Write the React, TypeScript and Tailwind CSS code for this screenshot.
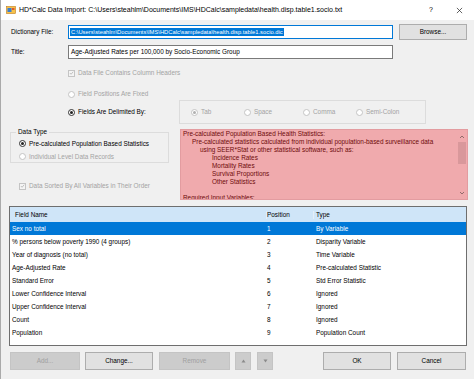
import { ReactNode } from 'react';

interface Row {
  name: string;
  pos: number;
  type: string;
}

const rows: Row[] = [
  { name: 'Sex no total', pos: 1, type: 'By Variable' },
  { name: '% persons below poverty 1990 (4 groups)', pos: 2, type: 'Disparity Variable' },
  { name: 'Year of diagnosis (no total)', pos: 3, type: 'Time Variable' },
  { name: 'Age-Adjusted Rate', pos: 4, type: 'Pre-calculated Statistic' },
  { name: 'Standard Error', pos: 5, type: 'Std Error Statistic' },
  { name: 'Lower Confidence Interval', pos: 6, type: 'Ignored' },
  { name: 'Upper Confidence Interval', pos: 7, type: 'Ignored' },
  { name: 'Count', pos: 8, type: 'Ignored' },
  { name: 'Population', pos: 9, type: 'Population Count' },
];

function Check({ label, disabled }: { label: string; disabled?: boolean }) {
  return (
    <div className="flex items-center gap-[3px]">
      <div className={`w-[7px] h-[7px] border flex items-center justify-center ${disabled ? 'border-[#c4c4c4] bg-[#f4f4f4]' : 'border-[#333] bg-white'}`}>
        <svg width="6" height="6" viewBox="0 0 6 6">
          <path d="M1 3 L2.5 4.5 L5 1.5" fill="none" stroke={disabled ? '#b0b0b0' : '#333'} strokeWidth="0.9" />
        </svg>
      </div>
      <span className={disabled ? 'text-[#a3a3a3]' : 'text-black'}>{label}</span>
    </div>
  );
}

function Radio({ label, checked, disabled }: { label: string; checked?: boolean; disabled?: boolean }) {
  return (
    <div className="flex items-center gap-[3px]">
      <div className={`w-[7px] h-[7px] rounded-full border flex items-center justify-center bg-white ${disabled ? 'border-[#c4c4c4]' : 'border-[#333]'}`}>
        {checked && <div className={`w-[3px] h-[3px] rounded-full ${disabled ? 'bg-[#b0b0b0]' : 'bg-[#222]'}`} />}
      </div>
      <span className={disabled ? 'text-[#a3a3a3]' : 'text-black'}>{label}</span>
    </div>
  );
}

function Btn({ children, w, disabled, ml }: { children: ReactNode; w: string; disabled?: boolean; ml: string }) {
  return (
    <div
      className={`${w} ${ml} h-[18px] flex items-center justify-center border ${
        disabled ? 'bg-[#cccccc] border-[#c4c4c4] text-[#a0a0a0]' : 'bg-[#e1e1e1] border-[#adadad] text-black'
      }`}
    >
      {children}
    </div>
  );
}

export default function App() {
  return (
    <div className="w-[474px] h-[379px] bg-[#f0f0f0] overflow-hidden text-[6.4px] leading-[8px] font-['Liberation_Sans',Arial,sans-serif] border-l border-[#aaa]">
      {/* Title bar */}
      <div className="h-[20px] bg-white flex items-center text-[7px] text-black">
        <svg width="10" height="10" viewBox="0 0 10 10" className="ml-[5px]">
          <rect x="0.5" y="1.5" width="9" height="7" fill="#f6c24a" stroke="#c07a1a" strokeWidth="0.6" />
          <rect x="1.5" y="3" width="4" height="4" fill="#3b7fd0" />
          <rect x="6" y="3" width="2.5" height="2" fill="#e05a2a" />
        </svg>
        <span className="ml-[3px]">HD*Calc Data Import: C:\Users\steahlm\Documents\IMS\HDCalc\sampledata\health.disp.table1.socio.txt</span>
        <span className="ml-auto mr-[23px]">?</span>
        <svg width="7" height="7" viewBox="0 0 8 8" className="mr-[11px]">
          <path d="M1 1 L7 7 M7 1 L1 7" stroke="#222" strokeWidth="0.8" />
        </svg>
      </div>

      {/* Dictionary file */}
      <div className="mt-[4px] h-[16px] flex items-center pl-[10px]">
        <span className="w-[57px]">Dictionary File:</span>
        <div className="w-[325px] h-[14px] border border-[#0078d7] bg-white flex items-center px-[1px]">
          <span className="bg-[#0078d7] text-white px-[1px] text-[5.8px]">C:\Users\steahlm\Documents\IMS\HDCalc\sampledata\health.disp.table1.socio.dic</span>
        </div>
        <div className="ml-[6px] w-[68px] h-[16px] bg-[#e1e1e1] border border-[#adadad] flex items-center justify-center">
          Browse...
        </div>
      </div>

      {/* Title */}
      <div className="mt-[5px] h-[14px] flex items-center pl-[10px]">
        <span className="w-[57px]">Title:</span>
        <div className="w-[325px] h-[14px] border border-[#7a7a7a] bg-white flex items-center px-[2px]">
          Age-Adjusted Rates per 100,000 by Socio-Economic Group
        </div>
      </div>

      <div className="mt-[9px] h-[10px] flex items-center pl-[67px]">
        <Check label="Data File Contains Column Headers" disabled />
      </div>

      <div className="mt-[11px] h-[10px] flex items-center pl-[67px]">
        <Radio label="Field Positions Are Fixed" disabled />
      </div>

      <div className="mt-[1px] h-[24px] flex items-center">
        <div className="w-[178px] pl-[67px]">
          <Radio label="Fields Are Delimited By:" checked />
        </div>
        <div className="w-[247px] h-[24px] border border-[#dcdcdc] flex items-center pl-[11px]">
          <div className="w-[53px]"><Radio label="Tab" checked disabled /></div>
          <div className="w-[59px]"><Radio label="Space" disabled /></div>
          <div className="w-[53px]"><Radio label="Comma" disabled /></div>
          <Radio label="Semi-Colon" disabled />
        </div>
      </div>

      {/* Data type + description */}
      <div className="mt-[4px] flex">
        <div className="w-[179px] pl-[9px]">
          <fieldset className="w-[159px] h-[35px] border border-[#dcdcdc] pl-[8px]">
            <legend className="ml-[-3px] px-[2px] text-black">Data Type</legend>
            <div className="mt-[1px] h-[13px] flex items-center">
              <Radio label="Pre-calculated Population Based Statistics" checked />
            </div>
            <div className="h-[13px] flex items-center">
              <Radio label="Individual Level Data Records" disabled />
            </div>
          </fieldset>
          <div className="mt-[18px] pl-[9px] h-[10px] flex items-center">
            <Check label="Data Sorted By All Variables in Their Order" disabled />
          </div>
        </div>
        <div className="mt-[1px] w-[288px] h-[71px] bg-[#f0aaad] border border-[#e39ca0] flex text-[#6e0a0a]">
          <div className="flex-1 overflow-hidden pl-[2px] leading-[8px] whitespace-pre">
            <div>Pre-calculated Population Based Health Statistics:</div>
            <div className="pl-[9px]">Pre-calculated statistics calculated from individual population-based surveillance data</div>
            <div className="pl-[17px]">using SEER*Stat or other statistical software, such as:</div>
            <div className="pl-[29px]">Incidence Rates</div>
            <div className="pl-[29px]">Mortality Rates</div>
            <div className="pl-[29px]">Survival Proportions</div>
            <div className="pl-[29px]">Other Statistics</div>
            <div>&nbsp;</div>
            <div className="h-[6px] overflow-hidden">Required Input Variables:</div>
          </div>
          <div className="w-[11px] flex flex-col items-center">
            <svg width="6" height="6" viewBox="0 0 6 6" className="mt-[4px]">
              <path d="M1 4 L3 2 L5 4" fill="none" stroke="#7a5a5a" strokeWidth="0.8" />
            </svg>
            <div className="mt-[2px] w-[8px] h-[22px] bg-[#d9989b]" />
            <svg width="6" height="6" viewBox="0 0 6 6" className="mt-auto mb-[3px]">
              <path d="M1 2 L3 4 L5 2" fill="none" stroke="#7a5a5a" strokeWidth="0.8" />
            </svg>
          </div>
        </div>
      </div>

      {/* List view */}
      <div className="mt-[6px] ml-[8px] w-[458px] h-[140px] border border-[#6e6e6e] bg-white">
        <div className="h-[15px] bg-[#cfe5f8] flex items-center">
          <span className="w-[257px] pl-[5px] border-r border-[#e5eef7]">Field Name</span>
          <span className="w-[47px] border-r border-[#e5eef7]">Position</span>
          <span className="pl-[2px]">Type</span>
        </div>
        {rows.map((r, i) => (
          <div key={r.name} className={`h-[13px] flex items-center ${i === 0 ? 'bg-[#0078d7] text-white' : 'text-black'}`}>
            <span className="w-[257px] pl-[2px]">{r.name}</span>
            <span className="w-[49px]">{r.pos}</span>
            <span>{r.type}</span>
          </div>
        ))}
      </div>

      {/* Buttons */}
      <div className="mt-[6px] flex">
        <Btn w="w-[70px]" ml="ml-[9px]" disabled>Add...</Btn>
        <Btn w="w-[68px]" ml="ml-[5px]">Change...</Btn>
        <Btn w="w-[71px]" ml="ml-[6px]" disabled>Remove</Btn>
        <Btn w="w-[16px]" ml="ml-[5px]" disabled>
          <svg width="5" height="4" viewBox="0 0 5 4"><path d="M0.5 3.5 L2.5 0.5 L4.5 3.5 Z" fill="#8a8a8a" /></svg>
        </Btn>
        <Btn w="w-[16px]" ml="ml-[6px]" disabled>
          <svg width="5" height="4" viewBox="0 0 5 4"><path d="M0.5 0.5 L2.5 3.5 L4.5 0.5 Z" fill="#8a8a8a" /></svg>
        </Btn>
        <Btn w="w-[68px]" ml="ml-[50px]">OK</Btn>
        <Btn w="w-[69px]" ml="ml-[6px]">Cancel</Btn>
      </div>
    </div>
  );
}
